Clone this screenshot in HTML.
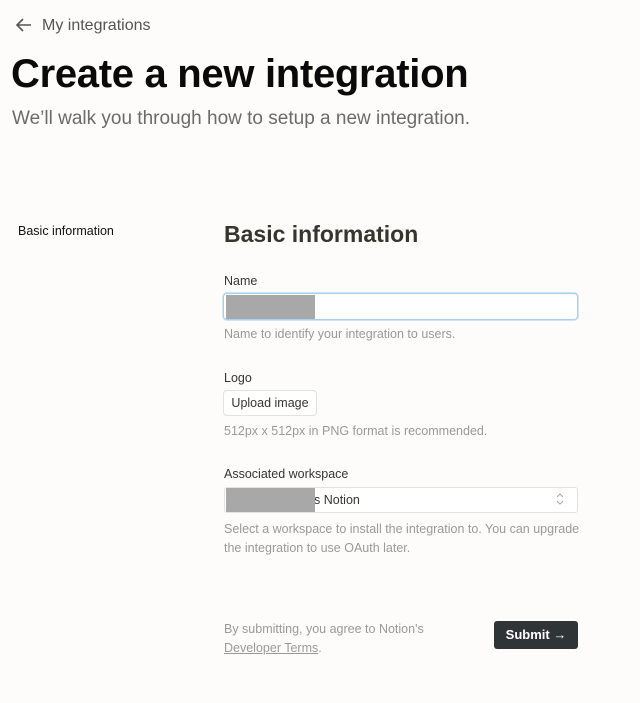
<!DOCTYPE html>
<html><head><style>
body{margin:0;width:640px;height:703px;background:#fdfcfa;font-family:"Liberation Sans",sans-serif;position:relative;overflow:hidden;color:#37352f}
.a{position:absolute;white-space:nowrap}
.muted{color:#9b9a97;font-size:12.5px}
.lbl{font-size:12.5px;color:#37352f}
</style></head><body>
<svg class="a" style="left:14px;top:17px" width="18" height="16" viewBox="0 0 18 16"><path d="M9 2L3 8L9 14M3 8H17" fill="none" stroke="#555" stroke-width="1.6"/></svg>
<div class="a" style="left:42px;top:17px;font-size:16px;color:#555">My integrations</div>
<div class="a" style="left:11px;top:52px;font-size:40px;font-weight:bold;color:#0a0a0a;letter-spacing:-0.3px">Create a new integration</div>
<div class="a" style="left:12px;top:108px;font-size:19px;color:#6b6b6b">We’ll walk you through how to setup a new integration.</div>
<div class="a" style="left:18px;top:224px;font-size:12.5px;color:#111">Basic information</div>
<div class="a" style="left:224px;top:221px;font-size:23px;font-weight:bold;color:#37352f">Basic information</div>
<div class="a lbl" style="left:224px;top:274px">Name</div>
<div class="a" style="left:223px;top:293px;width:353px;height:25px;background:#fff;border:1px solid #a9d0ec;border-radius:4px;box-shadow:0 0 0 1px #cfe5f4"></div>
<div class="a" style="left:226px;top:295px;width:89px;height:24px;background:#a8a8a8"></div>
<div class="a muted" style="left:224px;top:327px">Name to identify your integration to users.</div>
<div class="a lbl" style="left:224px;top:371px">Logo</div>
<div class="a" style="left:223px;top:390px;width:92px;height:24px;background:#fff;border:1px solid #e3e2e0;border-radius:4px;font-size:12.5px;line-height:24px;text-align:center;color:#37352f">Upload image</div>
<div class="a muted" style="left:224px;top:424px">512px x 512px in PNG format is recommended.</div>
<div class="a lbl" style="left:224px;top:467px">Associated workspace</div>
<div class="a" style="left:224px;top:487px;width:352px;height:24px;background:#fff;border:1px solid #e3e2e0;border-radius:3px"></div>
<div class="a" style="left:314px;top:493px;font-size:12.5px;color:#37352f">s Notion</div>
<div class="a" style="left:226px;top:488px;width:89px;height:24px;background:#a8a8a8"></div>
<svg class="a" style="left:556px;top:493px" width="8" height="12" viewBox="0 0 8 12"><path d="M1 4L4 1L7 4M1 8L4 11L7 8" fill="none" stroke="#aaa" stroke-width="1"/></svg>
<div class="a muted" style="left:224px;top:520px;line-height:19px">Select a workspace to install the integration to. You can upgrade<br>the integration to use OAuth later.</div>
<div class="a muted" style="left:224px;top:620px;line-height:19px">By submitting, you agree to Notion's<br><span style="text-decoration:underline">Developer Terms</span>.</div>
<div class="a" style="left:494px;top:621px;width:84px;height:28px;background:#2f3437;border-radius:3px;color:#fff;font-size:13px;font-weight:bold;line-height:28px;text-align:center">Submit →</div>
</body></html>
